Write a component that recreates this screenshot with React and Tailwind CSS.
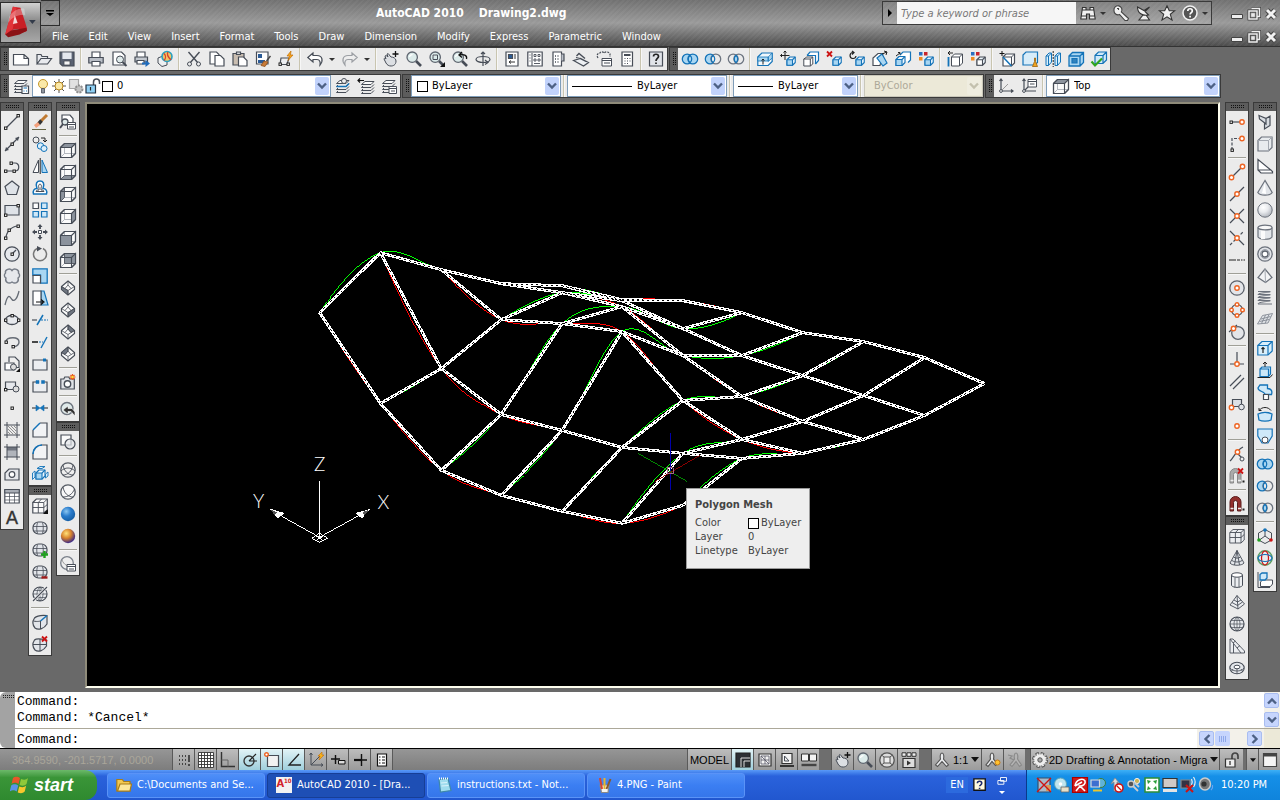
import { useState } from 'react';

const K = '#474d57';
const B = '#1473b8';
const L = '#a9d6f2';
const G = '#dfe3e8';
const O = '#ee6423';
const R = '#cc1414';

// One path with the defaults that most icons share
function P({ d, s = K, f = 'none', w = 1.2, dash }) {
  return <path d={d} stroke={s} fill={f} strokeWidth={w} strokeDasharray={dash} />;
}

function Dot({ x, y, r = 1.8 }) {
  return <circle cx={x} cy={y} r={r} fill="#fff" stroke={O} strokeWidth="1.4" />;
}

function Grips({ at }) {
  return at.map(([x, y]) => (
    <rect key={`${x}-${y}`} x={x - 1} y={y - 1} width="2.4" height="2.4" fill="#fff" stroke="#222" strokeWidth="1" />
  ));
}

function MiniCube({ x = 6, y = 6, size = 6, s = B, f = L }) {
  const d = size / 2;
  return (
    <g stroke={s} strokeWidth="1.1" strokeLinejoin="round">
      <path d={`M${x} ${y + d}l${d} ${-d}h${size}v${size}l${-d} ${d}h${-size}z`} fill="#eef7fd" />
      <path d={`M${x} ${y + d}h${size}v${size}h${-size}z`} fill={f} />
      <path d={`M${x + size} ${y + d}l${d} ${-d}`} />
    </g>
  );
}

const faces = {
  top: 'M.5 5.5l4-4h11l-4 4z',
  bottom: 'M.5 15.5l4-4h11l-4 4z',
  left: 'M.5 5.5l4-4v10l-4 4z',
  right: 'M11.5 5.5l4-4v10l-4 4z',
  front: 'M.5 5.5h11v10H.5z',
  back: 'M4.5 1.5h11v10h-11z',
};

function ViewCube({ face }) {
  return (
    <>
      <P d="M.5 5.5l4-4h11v10l-4 4H.5z" f="#fbfbfb" />
      <P d="M4.5 1.5v10h11M4.5 11.5l-4 4" s="#a2a7b0" w={0.8} />
      <P d={faces[face]} f="#8c939d" w={0.8} />
      <P d="M.5 5.5h11v10H.5zM11.5 5.5l4-4v10l-4 4M.5 5.5l4-4h11" w={1.1} />
    </>
  );
}

const isoFaces = {
  sw: 'M1.5 6.5l6.5 4V15L1.5 9.500z',
  se: 'M8 10.5l6.500-4v3L8 15z',
  ne: 'M8 1l6.500 5.500L11 8.500 8 5z',
  nw: 'M8 1L1.500 6.500 5 8.500 8 5z',
};

function IsoCube({ face }) {
  return (
    <>
      <P d="M8 1l6.500 5.500v3L8 15 1.500 9.500v-3z" f="#fafafa" />
      <P d={isoFaces[face]} f="#6f7681" w={0.8} />
      <P d="M1.500 6.500l6.500 4 6.500-4M8 10.500V15M8 1v4M8 5L5 8.500M8 5l3 3.500" w={0.8} />
    </>
  );
}

function Rings({ mode }) {
  const lens = 'M8 4.2a5 5 0 0 1 0 7.6a5 5 0 0 1 0-7.6z';
  return (
    <>
      <circle cx="5.2" cy="8" r="4.9" fill={mode === 'inter' ? 'none' : L} stroke={mode === 'inter' ? '#6d7580' : B} strokeWidth="1.3" />
      <circle cx="10.8" cy="8" r="4.9" fill={mode === 'union' ? L : mode === 'sub' ? '#ebebeb' : 'none'} stroke={mode === 'union' ? B : '#6d7580'} strokeWidth="1.3" />
      <P d={lens} f={mode === 'inter' ? L : 'none'} s={B} />
    </>
  );
}

function Globe({ s = K, f = '#e8ebef' }) {
  return (
    <>
      <circle cx="8" cy="8" r="7" fill={f} stroke={s} strokeWidth="1.2" />
      <P d="M1 8h14M2.500 4.500h11M2.500 11.500h11M8 1v14M8 1C4 4 4 12 8 15M8 1c4 3 4 11 0 14" s={s} w={0.7} />
    </>
  );
}

function Smooth() {
  return (
    <>
      <rect x="1" y="2" width="14" height="12" rx="5.5" fill="#e2e5ea" stroke={K} strokeWidth="1.2" />
      <P d="M1 6.500h14M2 11h12M5.500 2.500c-1 3-1 8 0 11M10.500 2.500c1 3 1 8 0 11" w={0.8} />
    </>
  );
}

function Lens() {
  return (
    <>
      <P d="M10 10l5 5" w={2.6} />
      <circle cx="6.2" cy="6.2" r="5.2" fill="#dcebea" stroke="#5f6670" strokeWidth="1.3" />
      <P d="M3.500 6a3 3 0 0 1 3-2.400" s="#fff" />
    </>
  );
}

function Layers({ s = K }) {
  return (
    <>
      <P d="M5 2.500h9l-3 3H1.500z" s={s} f="#fafafa" w={1} />
      <P d="M3 7L1.500 8.500h9.500l3-3M3 10l-1.500 1.500h9.500l3-3M3 13l-1.500 1.500h9.500l3-3" s={s} w={1} />
    </>
  );
}

function Hand() {
  return (
    <>
      <P d="M2 5c1-1 2 0 3 1l-1-3c1-1 2 0 3 2l1 1c2 0 5 1 5 4 0 4-3 5-5 5s-4-1-5-3L1 8c0-1 1-1 2 0z" f="#dcdfe3" w={1} />
      <P d="M12.5 0v6M9.5 3h6" s="#111" w={1.3} />
    </>
  );
}

function Cross({ x = 8, y = 1 }) {
  return <P d={`M${x} ${y}l5 5m0-5l-5 5`} s={R} w={1.8} />;
}

function Magnet({ s, f }) {
  return (
    <>
      <P d="M1 15V6a5.500 5.500 0 0 1 11 0v9H8.500V6.500a2 2 0 0 0-4 0V15z" s={s} f={f} w={1} />
      <P d="M1.500 12.500h3M9 12.500h3" s="#eee" w={1.6} />
      <rect x="13.5" y="12.5" width="2" height="2" fill="#222" />
    </>
  );
}

function Sphere({ id, a, b, c, ring }) {
  return (
    <>
      <defs>
        <radialGradient id={id} cx="38%" cy="32%" r="75%">
          <stop offset="0" stopColor={a} />
          <stop offset="0.45" stopColor={b} />
          <stop offset="1" stopColor={c} />
        </radialGradient>
      </defs>
      <circle cx="8" cy="8" r="7.2" fill={`url(#${id})`} stroke={ring} />
    </>
  );
}

const icons = {
  new: <P d="M.5 14V3.500h10.500l4.500 4V14zM11 3.500v4h4.500" f="#fff" />,
  open: <P d="M1 13V3.500h4l1 2h5.500V8M1 13l4-5.500h10.500L11.500 13z" f="#e8eaee" />,
  save: <><P d="M1 1h14v14H3.500L1 12.500z" f="#596171" /><P d="M4 2h8v5.500H4z" s="#e4e8ee" f="#e4e8ee" /><P d="M5 10h6v4H5z" f="#f5f5f5" w={0.8} /></>,
  print: <><P d="M4 7V1h8v6" f="#fff" /><P d="M.8 6.500h14.400v5.500H.8z" f="#b9bec6" /><P d="M4 10.500h8V15H4z" f="#fff" /></>,
  preview: <><P d="M2 1h8.500l3.500 3.500V14H2z" f="#fff" /><circle cx="9" cy="8.5" r="3.5" fill="#dfeaea" stroke={K} /><P d="M11.500 11l4 4" w={2} /></>,
  publish: <><P d="M3 6V1h8v5" f="#fff" /><P d="M1 6h12.500v5H1z" f="#c3c8cf" /><P d="M3 9.500h7V13H3z" f="#fff" /><P d="M8 11.500h3.500V9l4.500 3.500-4.500 3.500v-2.500H8z" s="none" f="#1f6bbb" /></>,
  web: <><P d="M1 7l5-2 4 4v5l-5 1.500L1 12z" f="#eef0f2" w={1} /><circle cx="10" cy="5.5" r="5" fill="#f2c464" stroke="#2a9fc0" strokeWidth="1.6" /><P d="M7 2.500c2 2 2 5 0 7M11 1c-2 3 1 6 3 8" s="#d6402f" w={1.3} /></>,
  cut: <><P d="M2.500 1l9.500 11M13.500 1L4 12" w={1.4} /><circle cx="3.5" cy="13" r="2" stroke={K} fill="#eee" /><circle cx="12.5" cy="13" r="2" stroke={K} fill="#eee" /></>,
  copyclip: <><P d="M1 1h6.500l2.500 2.500V13H1z" f="#fff" /><P d="M6 4.500h5.500l3.500 3.500v7H6z" f="#fff" /></>,
  paste: <><P d="M1 2.500h11V14H1z" f="#c9bdb0" /><P d="M4.500 1h4v2.500h-4z" f="#d5d8dc" /><P d="M6.500 6h5l3.500 3.500V15H6.500z" f="#fff" /></>,
  match: <><P d="M1.500 1h11.500v12H1.500z" f="#fff" /><P d="M3 3h4v4H3zM3 9h7v3H3z" f="#2b5b96" s="none" /><P d="M15.500 5l-4 5" s="#444" w={1.4} /><P d="M9 10l4 1-3 4.500-4-1z" f="#c77a37" s="#8c4f1c" w={0.8} /></>,
  blockedit: <><P d="M3 7h8l-2 6.500H2z" f="#eceef1" /><P d="M13 0L9 5h2.500L10 9.500 15 4h-2.500z" f="#f7a51c" s="#c26f08" w={0.7} /><Grips at={[[2, 13], [10, 13]]} /></>,
  undo: <P d="M6 2L.8 6.500 6 11V8.500h4c3 0 3.500 3 3 5.500 3.500-4 2.500-9.500-3-9.500H6z" f="#fff" />,
  redo: <P d="M10 2l5.200 4.500L10 11V8.500H6c-3 0-3.500 3-3 5.500C-.5 10 .5 4.500 6 4.500h4z" f="#eee" s="#9c9fa4" />,
  pan: <Hand />,
  zoom: <Lens />,
  zoomwin: <><Lens /><P d="M4 4h4.500v4.500H4z" w={1} /><P d="M16 11v5h-5z" f="#111" s="none" /></>,
  zoomprev: <><Lens /><P d="M14.500 8c1-4-3-5-7-4M10 1L7 4l3 2.500" s="#111" w={1.3} /></>,
  orbit: <><P d="M8 1v14M6 3l2-2 2 2" /><ellipse cx="8" cy="8.5" rx="7" ry="3" fill="none" stroke={K} strokeWidth="1.2" /><P d="M10 9l3 2.500-3 2" /></>,
  props: <><P d="M2 1h12v14H2z" f="#fff" /><P d="M4.500 3.500h4v4h-4z" f="#2b5b96" /><P d="M11 3v5M5 11h6M7 9.500L5 11l2 1.500" s="#333" w={1} /></>,
  center: <><P d="M.8 1h14.400v14H.8z" f="#fff" /><P d="M5 2v13M2.500 4h1M2.500 7h1M2.500 10h1" w={1} /><P d="M7 3.500h2v2H7zM11 3.500h2v2h-2zM7 8h2v2H7zM11 8h2v2h-2zM7 12.500h6" w={0.9} /></>,
  palettes: <><P d="M3 1h8.500v14H3z" f="#fff" /><P d="M11.500 3H14v7h-2.500" f="#bcc1c9" /><P d="M5 5h1M7.500 5h1M5 8h1M7.500 8h1M5 11h1M7.500 11h1" w={1.5} /></>,
  sheets: <><P d="M.5 9.500l7-2 8 4-5 3.500zM3 6.500l4 1 6 3" f="#eceff2" /><P d="M3.500 5L6 2.500l6 5" w={1.4} /></>,
  markup: <><P d="M2 7c-2-3 0-5 2-5 1-2 4-1 4 0 2-2 5-1 6 1v3" dash="2 1" /><P d="M6 7.500h9.500V15H6zM6 9.500h9.500M8 12h6" f="#fff" w={1} /></>,
  calc: <><P d="M3 1h10.500v14H3z" f="#fff" /><P d="M5 4h6.500" w={2} /><P d="M5.500 7.500h1M8 7.500h1M10.500 7.500h1M5.500 10h1M8 10h1M10.500 10h1M5.500 12.500h1M8 12.500h1" w={1} /></>,
  help: <><P d="M1.500 1h13v14h-13z" f="#e0e3e8" /><P d="M5.500 5.500c0-3 5-3 5 0 0 2-2.500 2-2.500 4.500M8 11.500v1.600" s="#222" w={1.7} /></>,
  union: <Rings mode="union" />,
  subtract: <Rings mode="sub" />,
  intersect: <Rings mode="inter" />,
  extrude: <><P d="M.8 6l4-4h10.400v8.500l-4 4H.8z" f="#f2f8fc" s={B} /><P d="M.8 6h10.400v4H.8zM11.200 6l4-4v5l-4 3.500z" f={L} s={B} w={0.8} /><P d="M6 13.500V8M4.500 9.500L6 8l1.500 1.500" s="#222" w={1} /></>,
  movefaces: <><MiniCube x={7} y={6} size={5.5} /><P d="M5 0v9M.5 4.500h9M3.500 1.500L5 0l1.500 1.500M2 3L.5 4.500 2 6" s="#222" w={1} /></>,
  offsetfaces: <><P d="M4 4.500l3-3.500h8.500v8.500l-3 3.500" s={B} f="#fff" /><P d="M4 4.500h8.500V13" s={B} /><P d="M.8 8l3-2h6v7l-2.500 2H.8zM.8 8h6.500v7M7.300 8l2.500-2" f="#fff" w={1} /></>,
  delfaces: <><MiniCube x={7} y={6} size={5.5} /><Cross x={1} y={0.5} /></>,
  rotfaces: <><MiniCube x={7} y={6} size={5.5} /><P d="M4 1.500A3 3 0 1 0 7 5M3 0l2 1.500-2 2" s="#222" /></>,
  taper: <><P d="M1 14.500V7l5-4.500h5L8 14.500z" f="#fff" /><P d="M5 7l5-4 5 9-4 3z" f={L} s={B} /><P d="M10 3l5-2M12 0l3 1-1 3" s="#222" w={1} /></>,
  copyfaces: <><P d="M5 4l3-3h7.500v8L13 11.500" s={B} f="#fff" /><MiniCube x={1} y={5.5} size={6} /><P d="M1 5l4-3M3 1.500h2v2" s="#222" w={1} /></>,
  colorfaces: <><MiniCube x={7} y={6} size={5.5} /><P d="M1 1h3.500v3.500H1z" s="none" f="#2a6fc1" /><P d="M6 1h3.500v3.500H6z" s="none" f="#c8252c" /><P d="M1 6h3.500v3.500H1z" s="none" f="#ee8a22" /></>,
  copyedges: <><P d="M4.500 6l3-3h8v9l-3 3h-8zM4.500 6h8v9M12.500 6l3-3" f="#fff" w={1} /><P d="M1.500 15.500V6" s={B} w={1.8} /><P d="M1 2h5M3 0L1 2l2 2" s="#222" w={1} /></>,
  coloredges: <><MiniCube x={7} y={6} size={5.5} s={K} f="#fff" /><P d="M1 1h3.500v3.500H1z" s="none" f="#2a6fc1" /><P d="M6 1h3.500v3.500H6z" s="none" f="#c8252c" /><P d="M1 6h3.500v3.500H1z" s="none" f="#ee8a22" /></>,
  imprint: <><P d="M4 6l3-3h8.500v9l-3 3H4z" f="#fff" /><P d="M4 6h8.500v9M12.500 6l3-3" w={1} /><P d="M4 6l8.500 9" s={B} w={1.5} /><P d="M3 0v5M.5 2.500h5" s="#111" w={1} /></>,
  clean: <><P d="M1 4l3-3h11.500v10.500L12.500 14H1z" f="#d7ecf9" s={B} /><P d="M12.500 7v3.500l-2 5h5l-2-5V7z" f="#f2a41f" s="#9a620a" w={0.8} /></>,
  separate: <><P d="M1 5l3-3h2.500v9l-3 3.500H1zM1 5h2.500v9.500M3.500 5L6.500 2M10 5l3-3h2.500v9l-3 3.500H10zM10 5h2.500v9.500M12.500 5l3-3" s={B} f="#d9effb" w={1} /><P d="M8.200 0v16" s="#222" dash="2 1" w={1} /></>,
  shell: <><P d="M1 5l3.500-3.500h11v10L12 15H1zM1 5h11v10M12 5l3.500-3.500" f={L} s={B} w={1.3} /><P d="M4 7.500h5V12H4z" f="#3182bd" s={B} /></>,
  check: <><P d="M4 4.500L7.500 1h8v8l-3.500 3.500H4zM4 4.500h8v8M12 4.500L15.500 1" f="#cfe8f8" s={B} /><P d="M.5 10.500l3.500 4 7-7" s="#2fa51f" w={2.2} /></>,

  layerprops: <><Layers /><P d="M9 8h6.500v7.500H9z" f="#fff" /><P d="M10.500 10h3.500M10.500 13h1M13 13h1" s={B} /></>,
  bulb: <><circle cx="8" cy="6" r="4.5" fill="#fbe9a8" stroke="#c4962a" /><P d="M6.500 10.500h3V15h-3z" f="#8f96a0" w={0.8} /></>,
  sun: <><P d="M8 1v14M1 8h14M3 3l10 10M13 3L3 13" s="#555" w={1} /><circle cx="8" cy="8" r="4" fill="#fbe9a8" stroke="#b8861c" /></>,
  freeze: <><P d="M1.500 1.500h9v9h-9z" f="#e2e2e2" s="#a5a5a5" /><circle cx="11" cy="11" r="3.5" fill="#c2c2c2" stroke="#8f8f8f" strokeDasharray="2 1" strokeWidth="2" /></>,
  lock: <><P d="M8.500 7V4a3 3 0 0 1 6 0v2" s={K} w={1.5} /><P d="M1 7h9.500v8H1z" f="#8fd0f4" s="#234" /><P d="M5.500 9v3.500" s="#222" /></>,
  layercur: <><Layers /><circle cx="9" cy="3" r="2.5" fill="#eee" stroke={K} /><P d="M1.500 8.500h9.500l3-3" s={B} w={1.5} /></>,
  layerprev: <><g transform="translate(2 1)"><Layers /></g><P d="M0 2.500h6M2 .5l-2 2 2 2" s="#111" /></>,
  layerstate: <><Layers /><P d="M8 8.500h7.500v7H8zM8 10.500h7.500M10 13h4" f="#fff" w={1} /></>,
  ucs: <><P d="M3 1v12h12M1.500 3L3 1l1.500 2M13 11.500l2 1.500-2 1.500" /><P d="M3 13l7-7" s="#999" w={1} /><circle cx="3" cy="13" r="1.4" fill="#fff" stroke={K} /></>,
  ucsman: <><P d="M3 1v12h12M1.500 3L3 1l1.500 2M3 13l4-4" /><P d="M7 1.500h8.500V9H7zM7 3.500h8.500M9 6h4.500" f="#fff" w={1} /><circle cx="3" cy="13" r="1.4" fill="#fff" stroke={K} /></>,
  topview: <ViewCube face="top" />,

  line: <><P d="M2 14L14 2" /><Grips at={[[1.5, 14], [14, 1.5]]} /></>,
  xline: <><P d="M1 15L15 1" /><P d="M15 1l-4 1 3 3zM1 15l4-1-3-3z" f={K} s="none" /><Grips at={[[8, 8]]} /></>,
  pline: <><P d="M2 13h9c5 0 5-8 0-8H8" /><Grips at={[[1.5, 13], [10, 13], [7, 5]]} /></>,
  polygon: <P d="M8 1l7 5.500L12.500 14.500h-9L1 6.500z" f={G} />,
  rect: <><P d="M1 3.500h14V13H1z" f={G} /><Grips at={[[1.5, 13], [14, 3.5]]} /></>,
  arc: <><P d="M2 14C2 8 8 2 14 2" /><Grips at={[[1.5, 14], [5, 6], [14, 2]]} /></>,
  circle: <><circle cx="8" cy="8" r="7.2" fill="#e6e8ec" stroke={K} strokeWidth="1.3" /><P d="M8 8l4-4" /><Grips at={[[8, 8]]} /></>,
  cloud: <P d="M8 2.500c2-3 7.500-1 6.500 2.500 2 2 1 4-.5 5 1.500 4-2.500 6.500-6 4-3.500 2.500-7.500 0-6-4-1.500-1-2.500-3-.5-5-1-3.500 4.500-5.500 6.500-2.500z" f="#e6e8ec" s="#777d87" w={1.4} />,
  spline: <P d="M1 15C4 2 6 7 8 9.500s5 0 7-8.500" s="#666c75" w={1.3} />,
  ellipse: <><ellipse cx="8" cy="8" rx="6.5" ry="4.5" fill="#e6e8ec" stroke={K} strokeWidth="1.3" /><Grips at={[[1.5, 8], [8, 3.5], [14.5, 8]]} /></>,
  ellarc: <><P d="M2 7c1-4 13-5 13 1 0 3-3 4.500-6 5" w={1.4} s="#666c75" /><Grips at={[[9, 12.5], [2, 8]]} /></>,
  insblock: <><P d="M5 6V1h6l4 4v6.500h-4" f="#eee" /><P d="M1 7h9v7H1z" f="#fff" /><circle cx="9.5" cy="11" r="3" fill="#ddd" stroke={K} /><P d="M16 12v4h-4z" f="#111" s="none" /></>,
  mkblock: <><P d="M1.500 4h10v7.500h-10z" f="#e6e8ec" /><circle cx="12" cy="11" r="3" fill="#ddd" stroke={K} /><Grips at={[[1.5, 11.5]]} /></>,
  point: <Grips at={[[8, 8]]} />,
  hatch: <><P d="M3 0v16M13 0v16M0 3h16M0 13h16" w={1} /><P d="M4 7l5 5M4 4l8 8M7 4l5 5M4 10l2 2M10 4l2 2" w={0.8} s="#777" /></>,
  gradient: <><P d="M3 3h10v10H3z" f="#b0b4bb" s="none" /><P d="M3 3h10v3.500H3z" f="#70757f" s="none" /><P d="M3 0v16M13 0v16M0 3h16M0 13h16" w={1} /></>,
  region: <><P d="M1 14V7l4-4h10v11z" f="#e6e8ec" /><circle cx="8" cy="8.5" r="2.8" fill="#fff" stroke={K} strokeWidth="1.2" /></>,
  table: <><P d="M.8 1.500h14.400v13.500H.8z" f="#fff" /><P d="M.8 1.500h14.400V5H.8z" f="#a9aeb6" w={1} /><P d="M1 8.500h14M1 12h14M5.500 5v10M10.500 5v10" w={0.7} /></>,
  mtext: <text x="8" y="14" textAnchor="middle" fontSize="18" fontFamily="Liberation Sans, sans-serif" fill="#333" stroke="#333" strokeWidth="0.4">A</text>,

  erase: <><P d="M15 1L9 7" s="#c07a32" w={3} /><P d="M9.500 6.500L6.500 10" s="#333" w={3.5} /><P d="M7 9.500l-4 3" s="#f3a07c" w={3.5} /><P d="M0 15.500h14" s="#664" w={1} /></>,
  copy: <><circle cx="4" cy="4" r="3" fill="#eee" stroke={K} /><circle cx="8.5" cy="10" r="3.2" fill="#dceffb" stroke={B} /><circle cx="12" cy="12.5" r="3" fill="#dceffb" stroke={B} /><P d="M9 2h4v4M11 4l2 2 2-2" s="#222" w={1} /></>,
  mirror: <><P d="M6.500 2v12.500H1z" f="#fff" w={1} /><P d="M10 2v12.500h5.500z" f={L} s={B} w={1} /><P d="M8.200 0v16" s="#222" w={1} /></>,
  offset: <><P d="M1.500 14h13c1-3-.5-5.500-3.500-5.500C13 3.500 11 1 8 1S3 3.500 5 8.500c-3 0-4.500 2.500-3.500 5.500z" s={B} w={1.5} f="#fff" /><P d="M4 11.500h8c0-1-1-1.500-3-1.500V8c1-2 0-4-1-4S6 6 7 8v2c-2 0-3 .5-3 1.500z" w={1} /></>,
  array: <><P d="M1 1h5.500v5.500H1z" f="#fff" /><P d="M9.500 1H15v5.500H9.500zM1 9.500h5.500V15H1zM9.500 9.500H15V15H9.500z" s={B} f="#cfe8f8" w={1.2} /></>,
  move: <><P d="M8 0l2.500 3h-5zM8 16l2.500-3h-5zM0 8l3-2.500v5zM16 8l-3-2.500v5z" f={K} s="none" /><P d="M8 3v2M8 11v2M3 8h2M11 8h2" w={1.8} /><P d="M6.500 6.500h3v3h-3z" f="#fff" w={1} /></>,
  rotate: <><P d="M5 2.500a6.500 6.500 0 1 0 6 0" s="#777" w={1.5} /><P d="M5 0l5 2.500L5 5.500z" f={K} s="none" /></>,
  scale: <><P d="M.8.800h14.400v14.400H8.500V7H.8z" f={L} s={B} w={1.3} /><P d="M1 7.500h7.500V15H1z" f="#fff" /></>,
  stretch: <><P d="M9 1h3l4 14H9z" f={L} s={B} /><P d="M1 1h8v14H1z" f="#fff" /><P d="M4 12h7M9 9.500l3 2.500-3 2.500" s="#111" /></>,
  trim: <><P d="M0 8h5" /><P d="M11 3L5 13" s={B} w={1.5} /><P d="M9 8h7" s={B} dash="2 1" /></>,
  extend: <><P d="M0 8h6" s="#111" w={1.5} /><P d="M7 8h4" s={B} dash="2 1" /><P d="M15 3L9 14" s={B} w={1.4} /></>,
  breakpt: <><P d="M1 4h14v10H1z" f="#eceef1" /><P d="M11 2.500h3v3h-3z" f={B} s="none" /></>,
  break: <><P d="M4 4H1v10h14V4h-3" f="#eceef1" /><P d="M4 2.500h3v3H4zM9.500 2.500h3v3h-3z" f={B} s={B} w={0.5} /></>,
  join: <><P d="M0 8h4M12 8h4" s="#222" /><P d="M4 5l4 3-4 3zM12 5L8 8l4 3z" f={B} s={B} w={0.6} /></>,
  chamfer: <><P d="M1 8v7h14V1H8z" f="#f2f3f5" s="none" /><P d="M1 8v7h14V1H8" /><P d="M1 8l7-7" s={B} w={1.5} /></>,
  fillet: <><P d="M1 10v5h14V1h-5C5 1 1 5 1 10z" f="#f2f3f5" /><P d="M1 10c0-5 4-9 9-9" s={B} w={1.6} /></>,
  explode: <><MiniCube x={4} y={4} size={6} /><P d="M.5 7L3 5v6l-2.500 2.500zM13.500 8L16 6v4l-2.500 2zM5 2.500L8 .5h5l-3 2z" s={B} f="#dceffb" w={0.9} /></>,

  meshbox: <><P d="M.8 4.500l3.500-3.500h11v11l-3.500 3H.8z" f="#fafafa" /><P d="M.8 4.500h11V15M11.800 4.500L15.300 1M6.300 4.500V15M.8 9.500h11l3.500-3M6.300 4.500L9.500 1" w={0.9} /><P d="M16 11v5h-5z" f="#111" s="none" /></>,
  smooth: <Smooth />,
  smoothmore: <><Smooth /><P d="M12.500 9v7M9 12.500h7" s="#21a021" w={2.4} /></>,
  smoothless: <><Smooth /><P d="M9.500 13.500h6" s="#a01818" w={2.4} /></>,
  refine: <><Globe /><P d="M1 15L15 1" s="#fff" w={2.5} /><P d="M1 15L15 1" /></>,
  crease: <><P d="M2.500 4C5 1.500 10 1 15 1.500V10c-3 5-9 6.500-12 4-2.500-3-2.500-7-.5-10z" f="#e2e5ea" /><P d="M1.500 7c4 1 7 0 7 0v8" w={1} /><P d="M8.500 7L15 1.500" s={B} w={1.5} /></>,
  uncrease: <><P d="M2.500 4C5 1.500 10 3 14.500 4V10c-3 5-8.500 6.500-11.500 4-2.500-3-2.500-7-.5-10z" f="#e2e5ea" /><P d="M1 8.500h13M8 3v12" w={1} /><Cross x={10} y={0.5} /></>,

  namedviews: <><P d="M2 8V1h8l3 3.500V8" f="#fff" /><circle cx="5" cy="8" r="3" fill="#dfeaea" stroke={K} strokeWidth="1.3" /><P d="M3 10l-3 4" w={2} /><P d="M7.500 8.500h8V15h-8zM7.500 10.500h8M9 13h5" f="#fff" w={1} /></>,
  vtop: <ViewCube face="top" />,
  vbottom: <ViewCube face="bottom" />,
  vleft: <ViewCube face="left" />,
  vright: <ViewCube face="right" />,
  vfront: <ViewCube face="front" />,
  vback: <ViewCube face="back" />,
  sw: <IsoCube face="sw" />,
  se: <IsoCube face="se" />,
  ne: <IsoCube face="ne" />,
  nw: <IsoCube face="nw" />,
  camera: <><P d="M.8 5h3l1-2h4l1 2h4.500v10H.8z" f="#dfe2e6" /><circle cx="7.5" cy="10" r="3.2" fill="#fff" stroke={K} strokeWidth="1.4" /><P d="M12.500 0v6M9.500 3h6M10.500 1l4 4M14.500 1l-4 4" s="#e8541c" w={1.2} /><circle cx="12.5" cy="3" r="1.3" fill="#ffd936" /></>,
  viewprev: <><circle cx="7" cy="6.5" r="6" fill="#dfeaea" stroke="#6d747e" strokeWidth="1.4" /><P d="M8 4L3 8l5 4V9.500h3l4 4.500V10l-3-3.500H8z" f="#333" s="#fff" w={0.6} /></>,
  wire2d: <><P d="M1 1h10v10H1z" f="#fafafa" /><circle cx="10" cy="10" r="5" fill="#e2e5e9" fillOpacity="0.7" stroke={K} strokeWidth="1.2" /></>,
  wire3d: <><circle cx="8" cy="8" r="7.2" fill="#eee" stroke="#555b64" strokeWidth="1.3" /><P d="M3 3c1 6 5 10 10 10M13 3c-1 6-5 10-10 10M1 9C5 5 11 5 15 9" w={0.9} /></>,
  hidden3d: <><circle cx="8" cy="8" r="7.2" fill="#f8f8f8" stroke="#555b64" strokeWidth="1.3" /><P d="M3 3c1 6 5 10 10 10M14.500 5c-2 5-6 8-11.500 8" w={0.9} /></>,
  realistic: <Sphere id="blue" a="#8cc6f0" b="#2a7ccc" c="#135a9f" />,
  conceptual: <Sphere id="gold" a="#ffe27a" b="#d8832c" c="#1f1a98" />,
  vsmanager: <><circle cx="7" cy="7" r="6.3" fill="#eee" stroke="#7a808a" strokeWidth="1.3" /><P d="M2 4c2 5 5 6 10 6" s="#999" w={1} /><P d="M7 8.500h8.500V15H7zM7 10.500h8.500M9 13h5" f="#fff" w={1} /></>,

  track: <><P d="M3 8h8" /><Grips at={[[2, 8]]} /><Dot x={13} y={8} r={2.2} /></>,
  from: <><P d="M3 14V2.500h8" dash="3 1.5" /><Grips at={[[3, 14]]} /><Dot x={13} y={2.5} r={2.2} /></>,
  endpoint: <><P d="M3 13L13 3" /><Dot x={2.5} y={13.5} r={2.2} /><Dot x={13.5} y={2.5} r={2.2} /></>,
  midpoint: <><P d="M1 15L15 1" /><Dot x={8} y={8} r={2.2} /></>,
  intersection: <><P d="M1 1l14 14M1 15L15 1" /><Dot x={8} y={8} r={2.2} /></>,
  apparent: <><P d="M1 1l5 5M10 10l5 5" /><P d="M1 15L15 1" dash="3 2" /><Dot x={8} y={8} r={2.2} /></>,
  extension: <P d="M0 8h7M8 8h3M12 8h1.500M14.500 8H16" s="#222" />,
  osnapcenter: <><circle cx="8" cy="8" r="7.2" fill="#e3e5e9" stroke="#5b616b" strokeWidth="1.3" /><Dot x={8} y={8} r={2.2} /></>,
  quadrant: <><circle cx="8" cy="8" r="5.5" fill="#e9ebee" stroke={K} strokeWidth="1.2" /><Dot x={8} y={2.5} /><Dot x={8} y={13.5} /><Dot x={2.5} y={8} /><Dot x={13.5} y={8} /></>,
  tangent: <><circle cx="9" cy="9" r="6.3" fill="#e3e5e9" stroke="#5b616b" strokeWidth="1.3" /><P d="M0 8l8-7" /><Dot x={4.5} y={4.5} r={2.2} /></>,
  perpendicular: <><P d="M8 0v11M1 12h14" /><Dot x={8} y={12} r={2.2} /></>,
  parallel: <P d="M1 12L12 1M4 15L15 4" />,
  osinsert: <><P d="M3.500 3.500h9v7h-9z" f="#dde0e5" /><circle cx="12.5" cy="11" r="2.8" fill="#e3e5e9" stroke={K} /><Dot x={2.5} y={11.5} r={2.2} /></>,
  node: <Dot x={8} y={8} r={2.2} />,
  nearest: <><P d="M1 15C5 12 6 5 14 1M8 7l5 5" /><Dot x={8.5} y={6} r={2.2} /><circle cx="13" cy="13" r="2" fill="#eee" stroke={K} /></>,
  osnone: <><Magnet s="#888" f="#aaa" /><Cross x={9} y={0.5} /></>,
  ossettings: <Magnet s="#5a1c1c" f="#93302e" />,

  mbox: <><P d="M.8 4.500L4 1.500h11.200V12L12 15H.8zM.8 4.500H12V15M12 4.500l3.200-3M6.400 4.500V15M.8 9.500H12l3.200-3M6.400 4.500l3-3" f="#eceef1" w={0.9} /></>,
  mcone: <P d="M8 .5L1 13c2 3 12 3 14 0zM8 .5L5.500 15M8 .5l2.500 14.500M4.500 7c2 1.500 5 1.500 7 0M3 10.500c3 2 7 2 10 0" f="#e3e6ea" w={0.9} />,
  mcylinder: <><P d="M2.500 3v10.500c2 2.500 9 2.500 11 0V3" f="#eceef1" w={1} /><ellipse cx="8" cy="3" rx="5.5" ry="2.2" fill="#fff" stroke={K} /><P d="M6 5.500v10M10 5.500v10" w={0.8} /></>,
  mpyramid: <P d="M8 1.500L1 11l8 4 6.500-5zM8 1.500L9 15M5 6l3.500 2L12 6M3 8.500l5.500 3 5-3.500" f="#eceef1" w={0.9} />,
  msphere: <Globe />,
  mwedge: <P d="M1 1v14h11zM1 1h3l11.500 12v2H12M4 5l2.500-2M8 10l3-2.500M4.500 15V6" f="#eceef1" w={0.9} />,
  mtorus: <><ellipse cx="8" cy="8" rx="7.2" ry="5.8" fill="#e4e7eb" stroke={K} strokeWidth="1.1" /><ellipse cx="8" cy="7" rx="3" ry="1.8" fill="#fff" stroke={K} /><P d="M1 8c3 4 11 4 14 0M8 9v4.500M4 9l-2 3M12 9l2 3" w={0.8} /></>,

  polysolid: <P d="M2 1.500l7 3v5.500L2.500 5zM9 4.500L13 2v9.500L7.500 15V10L9 9.500z" f="#d8dce1" />,
  box: <><P d="M1 4.500L4.500 1H15v10.500L11.500 15H1z" f="#e8ebee" s="#6c727c" /><P d="M1 4.500h10.500V15M11.500 4.500L15 1" s="#a4a9b1" w={1} /></>,
  wedge: <P d="M1 1.500V12l3 3h11.500v-1.500zM1 12h13.500" f="#fff" />,
  cone: <><P d="M8 .5L.8 12.500c2 3.500 12.400 3.500 14.400 0z" f="#e2e5e9" s="#6c727c" /><P d="M8 2L5 13l4 1z" f="#fff" s="none" /></>,
  sphere: <Sphere id="grey" a="#ffffff" b="#e9ebee" c="#a9aeb6" ring="#6c727c" />,
  cylinder: <><P d="M1 3.500v9.500c2 3 12 3 14 0V3.500" f="#e2e5e9" s="#6c727c" /><P d="M4 6h4v9H4z" f="#fbfbfb" s="none" /><ellipse cx="8" cy="3.5" rx="7" ry="2.3" fill="#f8f8f8" stroke="#6c727c" strokeWidth="1.2" /></>,
  torus: <><circle cx="8" cy="8" r="7.2" fill="#e2e4e8" stroke="#6c727c" strokeWidth="1.3" /><circle cx="8" cy="8" r="4.5" fill="none" stroke="#9a9fa8" /><circle cx="8" cy="8" r="3" fill="#fff" stroke="#5c626c" strokeWidth="1.3" /></>,
  pyramid: <><P d="M8 1L1 9.500l7.500 5 6.500-5z" f="#f3f4f6" s="#6c727c" /><P d="M8 1l.5 13.500" s="#a4a9b1" w={1} /></>,
  helix: <P d="M1 1.500h12c3 1-12 1-12 3h12c3 1-12 1-12 3h12c3 1-12 1-12 3h12c3 1-12 1-12 3.500h14" s="#6c727c" w={1} />,
  planar: <P d="M.5 12l5-8.500 10-2L11 11zM4 7l9.500-2.500M2.500 9.500l9.500-2M8.500 3L4.500 11.500M12 2.500L8 11.500" s="#848a94" f="#e0e3e7" w={0.9} />,
  extrude2: <><P d="M.8 5.500L5 1.500h10.200v9.500L11 15H.8z" f="#d9effb" s={B} /><P d="M.8 5.500H11V15M11 5.500l4.200-4" s={B} /><P d="M6 13V7.500M4.500 9L6 7.500 7.500 9" s="#222" /></>,
  presspull: <><P d="M3 7l2-2h8.500v7l-2 2.500H3zM3 7h8.500v7.500" f="#cbe7f8" s={B} /><P d="M.5 15.500H13l2.500-3M8 5V0M6 2l2-2 2 2" s="#222" w={1} /></>,
  sweep: <><P d="M3 1h7.500v3.500c4 0 5 3 4 6H8C8 7 1 8 1 4z" f="#cfe9f9" s={B} w={1.3} /><P d="M6.500 10.500h5V15.500h-5z" f="#fff" /></>,
  revolve: <><P d="M2 4.500c3-4 9-4 12 0M2 2v2.500h2.500" s="#222" w={1} /><P d="M1 8c4-2 10-2 14 0l-1 6c-3 1.500-9 1.500-12 0z" f="#cfe9f9" s={B} w={1.3} /></>,
  loft: <><P d="M.8 1h14.400v7L11 15H5L.8 8z" f="#cfe9f9" s={B} w={1.2} /><circle cx="8" cy="12" r="3" fill="#fff" stroke={K} /></>,
  align3d: <><P d="M8 2v6l5.500 4M8 8l-5.500 4M1.500 5L8 1.500 14.500 5v7L8 15.500 1.500 12z" w={1} /><circle cx="8" cy="2" r="1.8" fill={B} /><circle cx="2" cy="12" r="1.8" fill="#21a021" /><circle cx="14" cy="12" r="1.8" fill={R} /></>,
  gizmo: <><circle cx="8" cy="8" r="7.2" fill="none" stroke="#5c9c62" strokeWidth="1.4" /><ellipse cx="8" cy="8" rx="3.5" ry="7" fill="none" stroke={R} strokeWidth="1.2" /><ellipse cx="8" cy="8" rx="7" ry="3.5" fill="none" stroke={B} strokeWidth="1.2" /></>,
  align: <><P d="M3.500 10l2-2h10v4l-2 2.500h-10z" f="#fff" w={1} /><P d="M3 2.500L5 1h5v5L8 8H3z" f="#cfe9f9" s={B} w={1.3} /><P d="M1 0v15.500h12" w={1} /></>,

  snap: <><P d="M3 4h9M3 8h9M3 12h9" dash="1 2" s="#222" w={1.4} /><P d="M13 3v7M13 12v2" s="#222" w={1.4} /></>,
  grid: <P d="M.5.500h15v15H.5zM3.500.500v15M6.500.500v15M9.500.500v15M12.500.500v15M.5 3.500h15M.5 6.500h15M.5 9.500h15M.5 12.500h15" f="#fff" s="#333" w={0.9} />,
  ortho: <><P d="M1.500 0v14.500H15" s="#333" w={1.4} /><P d="M1.500 8H8v6.500" s="#666" w={1} /></>,
  polar: <><circle cx="7" cy="9" r="5" fill="none" stroke="#333" strokeWidth="1.3" /><P d="M7 9h8M7 9l7-7" s="#222" w={1.1} /></>,
  osnap: <><P d="M3.500 3.500h11v11h-11z" f="#f2f2f2" /><Dot x={2.5} y={2.5} /></>,
  otrack: <P d="M13 2L3 13h12" s="#222" w={1.3} />,
  ducs: <><P d="M3 1v12h12M3 13l9-9M1.500 3L3 1l1.500 2M13 11.500l2 1.500-2 1.500" w={1} /><P d="M14 0l-4 4h2l-1 4 5-5h-2z" f="#f7b21c" s="#c26f08" w={0.6} /></>,
  dyn: <><P d="M1 7h9M5.500 3v9" s="#111" w={1.4} /><P d="M8.500 8.500H15V12H8.500z" s="#111" f="#ddd" w={1} /></>,
  lwt: <><P d="M2 8h8" s="#111" w={2.2} /><P d="M9.500 2v12M10 8h5" s="#111" w={1.4} /></>,
  qp: <><P d="M3.500 2h9v12h-9z" f="#fff" s="#111" /><P d="M5 5h1.500M8 5h3M5 8h1.500M8 8h3M5 11h1.500M8 11h3" s="#111" /></>,
  model: <><P d="M1 1h14v14H1z" f="#2c2f34" s="#222" /><P d="M15 6H6v9M15 9H9v6" s="#ddd" w={1} /></>,
  layout: <><P d="M2 2h12v12H2z" f="#f4f4f4" s="#333" /><P d="M4 4h8v8H4zM4 4l8 8M4 8h8M8 4v8" s="#556" w={0.8} /></>,
  quicklay: <><P d="M3 1.500h10v10H3z" f="#f4f4f4" s="#333" /><P d="M5.500 4v5h4.500z" w={1} /><P d="M1 14h14" s="#333" w={2} /></>,
  quickdraw: <><P d="M.5 2h7v7h-7zM8.500 2h7v7h-7z" f="#f4f4f4" s="#333" w={1} /><P d="M.5 13h15" s="#444" w={2.4} /></>,
  wheel: <><circle cx="8" cy="8" r="7.2" fill="#ddd" stroke="#555" strokeWidth="1.3" /><P d="M5 5h6v6H5zM2.500 3L5 5M11 5l2.500-2M5 11l-2.500 2M11 11l2.500 2" f="#eee" s="#555" w={1} /></>,
  motion: <><P d="M1 .8h4v3.500H1zM6 .8h4v3.500H6zM11 .8h4v3.500h-4z" f="#eee" s="#333" w={1} /><P d="M2 6.500h12v9H2z" f="#ddd" s="#333" /><P d="M6 8.500l4 2.500-4 2.500z" f="#333" s="none" /></>,
  anno: <P d="M8 1c2 0 2 4 1.500 6l5 6-2 1.500-4.500-5-4.500 5L1.500 13l5-6C6 5 6 1 8 1z" f="#eceef0" s="#555" w={1.1} />,
  annoadd: <><P d="M7 1c2 0 2 4 1.500 6l4 5-2 1.500-3.500-4-4 5L1 13l4.500-6C5 5 5 1 7 1z" f="#eceef0" s="#555" /><circle cx="12.5" cy="10.5" r="2.5" fill="#ffc22e" stroke="#c77a12" /></>,
  annoauto: <P d="M9 1c2 0 2 4 1.500 6l4 6-2 1.500-3.500-5-4 5L3 13l4.500-6C7 5 7 1 9 1zM1 3l4 1-2 2 4 2" f="#b5b5b5" s="#8a8a8a" />,
  gear: <><circle cx="8" cy="8" r="6" fill="none" stroke="#555" strokeWidth="4" strokeDasharray="2.9 1.812" /><circle cx="8" cy="8" r="5.8" fill="#eee" stroke="#eee" strokeWidth="2.4" strokeDasharray="1.6 2.955" strokeDashoffset="-0.6" /><circle cx="8" cy="8" r="5" fill="#eee" /><circle cx="8" cy="8" r="2.2" fill="#aaa" stroke="#555" /></>,
  unlock: <><P d="M8 7V4a3 3 0 0 1 6 0v3" s="#444" w={1.7} /><P d="M1.500 7H11v8H1.500z" f="#eee" s="#333" /><P d="M6 9v4" s="#222" /></>,
  cleanscr: <><P d="M1.500 1.500h13v13h-13z" f="#f4f4f4" s="#444" /><P d="M1.500 3h13" s="#444" w={3} /></>,

  binoc: <P d="M.8 14L2.500 2.500H6V5h4V2.500h3.500L15.200 14H9.500V9h-3v5zM2.500 5H6M10 5h3.500M1.500 11h5M9.500 11h5" f="#f0f0f0" s="#333" w={1.1} />,
  key: <P d="M1 5.500a4 4 0 1 1 7.300 1.500l7.200 6.500-1 2H12L6.500 9.500A4 4 0 0 1 1 5.500zM4 3.500h1.500V5" f="#f0f0f0" s="#444" w={1.1} />,
  dish: <P d="M1.500 2c0 6.500 5 9 11 8L9 6.500 13.500 2 8 5.500zM7 10l-4 5h10.500L10 10" f="#f0f0f0" s="#333" w={1.1} />,
  star: <P d="M8 .8l2.300 5h5.200l-4.200 3.500 1.700 5.700L8 11.800 3 15l1.700-5.700L.5 5.800h5.200z" f="#f0f0f0" s="#333" w={1.1} />,
  question: <><circle cx="8" cy="8" r="7" fill="#555" stroke="#f2f2f2" strokeWidth="1.5" /><P d="M5.800 6c0-3 4.500-3 4.500 0 0 1.700-2.200 1.700-2.200 3.600M8.100 10.800v1.800" s="#fff" w={1.7} /></>,

  folder: <><P d="M.8 14V2.500h5.500l1.500 2H14V14z" f="#f3c951" s="#a87c19" /><P d="M1.500 14L4 7h11.500L14 14z" f="#fde79a" s="#a87c19" /></>,
  notepad: <><P d="M3 2.500l9-1 3 12-10.500 1.500z" f="#9fdcee" s="#3e88a8" /><P d="M3 1.500h9" s="#fff" dash="1 1" w={2} /><P d="M5 6l6-.5M5.500 9l7-.5" s="#d9f2fa" /></>,
  paint: <><P d="M4 8h9l-1 7.500H5.500z" f="#f4f4f0" s="#888" /><P d="M6 12L4 1" s="#d9442e" w={2} /><P d="M8.500 12V1" s="#e7b52b" w={2} /><P d="M10.500 12l4-10" s="#8a5a2c" w={2} /></>,
  ime: <><P d="M1 1h13v13H1z" f="#fffbe0" s="#111" w={1.5} /><P d="M5 6c0-3 5-3 5 0 0 2-2.500 2-2.500 3.500M7.500 11v1.500" s="#1c2a6d" w={1.8} /></>,
  restore: <P d="M6 2h8v5H6zM2.500 6h8v5h-8z" s="#fff" f="#2459c8" w={1.2} />,
  t1: <><P d="M2 1h12v14H2z" f="#a9b9c9" s="#35506e" /><P d="M10 8h5v6h-5z" f="#d89a5a" s="none" /><P d="M1 1l14 14M15 1L1 15" s={R} w={1.4} /></>,
  t2: <><circle cx="6.5" cy="7" r="6" fill="#bfe5ee" stroke="#5ea4b8" /><circle cx="6.5" cy="7" r="1.8" fill="#fff" /><P d="M7 10h8v5H7z" f="#e7e0c8" s="#666" w={0.8} /></>,
  t3: <><P d="M.5.500h15v15H.5z" f="#d01b1b" s="#a00" /><P d="M3 9C4 2 11 1 13 4c1 3-2 5-5 5l5 5M3 9l7-4M8 9l-4 5" f="none" s="#fff" w={1.6} /></>,
  t4: <><circle cx="11" cy="6" r="4.5" fill="#5fb3d8" stroke="#3a7c3a" /><P d="M1 3h8.500v7H1z" f="#3e6fd0" s="#ddd" /><P d="M3 13.500h9" s="#e9c52c" w={2} /></>,
  t5: <><P d="M6 14V5L3 7l4-6 5 6-3-2v9z" f="#ddd" s="#888" w={0.8} /><circle cx="11" cy="11" r="4" fill="#fff" stroke={R} strokeWidth="1.6" /><P d="M8.500 8.500l5 5" s={R} /></>,
  t6: <><circle cx="5" cy="7" r="3" fill="#555" stroke="#ccc" strokeWidth="1.4" /><circle cx="11" cy="4" r="2.6" fill="#c9b458" stroke="#eee" /><P d="M7 9l5 5M9 6l4 4" s="#ccc" w={1.8} /></>,
  t7: <><P d="M1 1h14v14H1z" f="#fff" s="#2c8f39" w={1.5} /><P d="M3 3l4 1-3 3zM13 3L9 4l3 3zM3 13l4-1-3-3zM13 13l-4-1 3-3z" f="#2c9f39" s="none" /></>,
  t8: <><P d="M1 1.500h14v9H1z" f="#cfc9c6" s="#333" /><P d="M1 13.500h14" s="#e4e4e4" w={3} /></>,
  t9: <><P d="M1 3h9v8H1z" f="#334" s="#888" /><P d="M11.500 2c1 2 1 4 0 6M13.500 0c2 3 2 7 0 10" s="#eee" /><P d="M6 8l7 7M13 8l-7 7" s={R} w={2} /></>,
  t10: <><ellipse cx="7" cy="7" rx="5.5" ry="6" fill="#777" stroke="#ccc" strokeWidth="1.4" /><circle cx="6" cy="7" r="2.6" fill="#333" /><P d="M13 13c1-1 2-3 1.500-5" s="#6ba5f0" /></>,
};

function Icon({ name, className = 'size-4' }) {
  return (
    <svg viewBox="0 0 16 16" className={`shrink-0 overflow-visible ${className}`} aria-hidden="true">
      {icons[name]}
    </svg>
  );
}

function Tool({ name }) {
  return (
    <button type="button" aria-label={name} className="flex h-[22px] w-[23px] shrink-0 items-center justify-center">
      <Icon name={name} />
    </button>
  );
}

function Grip({ vertical }) {
  return (
    <div className={`flex shrink-0 items-center justify-center bg-[#5c5c5c] ${vertical ? 'h-2' : 'w-2'}`}>
      <div
        className={`bg-[conic-gradient(#111_25%,transparent_0)] bg-[length:2px_2px] ${vertical ? 'h-1 w-[14px]' : 'h-[14px] w-1'}`}
      />
    </div>
  );
}

function Sep() {
  return <div className="mx-[2px] w-[2px] shrink-0 self-stretch border-l border-[#c9c5b0] bg-white/60" />;
}

// Toolbars are lists of tool names; "|" stands for a separator
function HBar({ tools = '', children }) {
  return (
    <div className="flex h-6 border border-[#3a3a3a] bg-[#ebebeb]">
      <Grip />
      {tools.split(' ').filter(Boolean).map((t, i) => {
        if (t === '|') return <Sep key={i} />;
        if (t === 'v') return <Caret key={i} className="w-3" />;
        return <Tool key={i} name={t} />;
      })}
      {children}
    </div>
  );
}

function VBar({ tools }) {
  return (
    <div className="flex w-6 flex-col border border-[#3a3a3a] bg-[#ebebeb]">
      <Grip vertical />
      {tools.split(' ').map((t, i) =>
        t === '|' ? (
          <div key={i} className="mx-[2px] my-[2px] h-[2px] border-t border-[#9f9f97] bg-white/60" />
        ) : (
          <button key={i} type="button" aria-label={t} className="flex h-[22px] items-center justify-center">
            <Icon name={t} />
          </button>
        )
      )}
    </div>
  );
}

function Caret({ className = 'w-[13px]' }) {
  return (
    <span className={`flex shrink-0 items-center justify-center ${className}`}>
      <svg viewBox="0 0 6 3" className="h-[3px] w-[6px]">
        <path d="M0 0h6L3 3z" fill="#333" />
      </svg>
    </span>
  );
}

function Chevron({ dir = 'down', disabled }) {
  const turn = { down: '', up: 'rotate-180', left: 'rotate-90', right: '-rotate-90' }[dir];
  return (
    <svg viewBox="0 0 10 8" className={`h-2 w-[10px] ${turn}`}>
      <path d="M1 1.500l4 4 4-4" fill="none" stroke={disabled ? '#c4c1ae' : '#4d6185'} strokeWidth="2.4" />
    </svg>
  );
}

function Combo({ label, value, width, disabled, lead, padding = 'pl-1' }) {
  return (
    <div className={`flex h-[22px] min-w-0 items-center border ${width} ${disabled ? 'border-[#c9c7ba] bg-[#ece9d8]' : 'border-[#7f9db9] bg-white'}`}>
      {lead}
      <select
        aria-label={label}
        disabled={disabled}
        className={`h-full min-w-0 flex-1 appearance-none bg-transparent outline-none ${padding} ${disabled ? 'text-[#aca899]' : 'text-black'}`}
      >
        <option>{value}</option>
      </select>
      <span className={`mr-px flex h-[18px] w-[14px] items-center justify-center rounded-[2px] ${disabled ? 'bg-[#efede0]' : 'bg-[#c2d3fc]'}`}>
        <Chevron disabled={disabled} />
      </span>
    </div>
  );
}

function Swatch() {
  return <span className="size-[11px] shrink-0 border border-black bg-white" />;
}

function WindowButtons() {
  return (
    <div className="flex items-center gap-[3px]">
      <button type="button" aria-label="Minimize" className="flex h-[14px] w-[14px] items-center justify-center">
        <svg viewBox="0 0 14 14"><path d="M1.500 7.500h11v4h-11z" fill="#eee" stroke="#444" /></svg>
      </button>
      <button type="button" aria-label="Restore" className="flex h-[14px] w-[14px] items-center justify-center">
        <svg viewBox="0 0 14 14">
          <path d="M4.500 1.500h8v8h-2M2 4h8v8H2z" fill="none" stroke="#444" strokeWidth="3" />
          <path d="M4.500 1.500h8v8h-2M2 4h8v8H2zM5 7h2v2H5z" fill="none" stroke="#eee" strokeWidth="1.5" />
        </svg>
      </button>
      <button type="button" aria-label="Close" className="flex h-[14px] w-[14px] items-center justify-center">
        <svg viewBox="0 0 14 14">
          <path d="M3 3l8 8M11 3l-8 8" stroke="#444" strokeWidth="5" />
          <path d="M3 3l8 8M11 3l-8 8" stroke="#f2f2f2" strokeWidth="3" />
        </svg>
      </button>
    </div>
  );
}

const menus = ['File', 'Edit', 'View', 'Insert', 'Format', 'Tools', 'Draw', 'Dimension', 'Modify', 'Express', 'Parametric', 'Window'];

function Header() {
  const [query, setQuery] = useState('');
  return (
    <header className="flex h-[47px] border-b border-[#333] bg-[repeating-linear-gradient(135deg,rgba(255,255,255,0.04)_0_2px,transparent_2px_4px),linear-gradient(#717171,#9a9a9a_50%,#4c4c4c)]">
      <button type="button" aria-label="Application menu" className="mt-[2px] flex h-[41px] w-[41px] items-center border border-[#2d2d2d] bg-linear-to-b from-[#d2d2d2] via-[#858585] to-[#a8a8a8]">
        <svg viewBox="0 0 40 41" className="h-full w-full">
          <path d="M12 4l8 1 7 22-1 3-7 2-1-5-6 1-3 6-5-1z" fill="#c91f25" />
          <path d="M12 4l4 .5-4 22-3 7-5-1z" fill="#e2343a" />
          <path d="M4 33l6-4 16-3 1 3-8 4-12 3z" fill="#8b1216" />
          <path d="M14 13l3 8-5 1z" fill="#f3d9d9" />
          <path d="M8 15C11 8 19 5 24 6l1 7C19 12 13 13 7 21z" fill="#fff" opacity="0.3" />
          <path d="M29 18h7l-3.500 4z" fill="#333b4a" />
        </svg>
      </button>
      <div className="flex min-w-0 flex-1 flex-col">
        <div className="flex h-[27px] justify-between">
          <button type="button" aria-label="Quick access" className="flex h-[26px] w-[19px] items-center justify-center border border-l-0 border-[#2d2d2d]">
            <svg viewBox="0 0 8 6" className="h-[6px] w-2"><path d="M0 0h8v1.500H0zM0 3h8L4 6z" /></svg>
          </button>
          <h1 className="ml-[100px] flex-1 whitespace-pre pl-[216px] pt-[5px] text-xs leading-4 font-bold text-white">
            AutoCAD 2010{'    '}Drawing2.dwg
          </h1>
          <div className="mt-px flex h-6 items-center border border-[#3a3a3a] bg-white/10">
            <svg viewBox="0 0 4 8" className="mx-[5px] h-2 w-1"><path d="M0 0l4 4-4 4z" /></svg>
            <input
              aria-label="Search"
              placeholder="Type a keyword or phrase"
              value={query}
              onChange={(e) => setQuery(e.target.value)}
              className="h-full w-[179px] bg-[#f6f6f6] px-1 text-[11px] italic outline-none placeholder:text-[#777]"
            />
            <button type="button" aria-label="Find" className="ml-1"><Icon name="binoc" /></button>
            <Caret />
            <button type="button" aria-label="Subscription" className="ml-1"><Icon name="key" /></button>
            <button type="button" aria-label="Communication" className="ml-[7px]"><Icon name="dish" /></button>
            <button type="button" aria-label="Favorites" className="ml-[7px]"><Icon name="star" /></button>
            <button type="button" aria-label="Help" className="ml-[7px]"><Icon name="question" /></button>
            <Caret />
          </div>
          <div className="mr-[2px] ml-[18px] flex items-center"><WindowButtons /></div>
        </div>
        <div className="flex h-[19px] items-center justify-between">
          <nav className="ml-[11px] flex gap-[20px] text-white">
            {menus.map((m) => (
              <a key={m} href={`#${m.toLowerCase()}`}>{m}</a>
            ))}
          </nav>
          <div className="mr-[2px]"><WindowButtons /></div>
        </div>
      </div>
    </header>
  );
}

// Mesh vertices: one row per M division, on a step of about 61 units
const xs = [319, 380, 441, 501, 562, 622, 683, 742, 803, 864, 925, 985];
const ys = [
  [312, 252, 269, 283, 285, 299],
  [403, 368, 319, 292, 300, 300],
  [470, 414, 323, 306, 328, 312],
  [495, 430, 331, 355, 355, 332],
  [511, 447, 400, 396, 375, 341],
  [523, 453, 439, 421, 395, 357],
  [505, 458, 453, 439, 415, 383],
];
const rows = ys.map((r, i) => r.map((y, j) => [xs[i + j], y]));
const cols = ys[0].map((_, j) => rows.map((r) => r[j]));

const polyline = (pts) => 'M' + pts.map((p) => p.join(' ')).join('L');

// Point before a, continuing the bend of a, b, c
const extend = (a, b, c) => [2 * a[0] - b[0], 2 * a[1] - b[1] + 0.8 * (c[1] - 2 * b[1] + a[1])];

function curve(pts) {
  const n = pts.length;
  const p = [extend(pts[0], pts[1], pts[2]), ...pts, extend(pts[n - 1], pts[n - 2], pts[n - 3])];
  let d = `M${p[1].join(' ')}`;
  for (let i = 1; i < n; i++) {
    const c1 = [p[i][0] + (p[i + 1][0] - p[i - 1][0]) / 6, p[i][1] + (p[i + 1][1] - p[i - 1][1]) / 6];
    const c2 = [p[i + 1][0] - (p[i + 2][0] - p[i][0]) / 6, p[i + 1][1] - (p[i + 2][1] - p[i][1]) / 6];
    d += `C${c1.join(' ')} ${c2.join(' ')} ${p[i + 1].join(' ')}`;
  }
  return d;
}

function Drawing() {
  const lines = [...rows, ...cols].map(polyline);
  return (
    <svg viewBox="87 103 1131 583" className="absolute inset-0 h-full w-full" fill="none" shapeRendering="crispEdges">
      {cols.map((c, i) => <path key={i} d={curve(c)} stroke="#f00" />)}
      {rows.map((r, i) => <path key={i} d={curve(r)} stroke="#0f0" />)}
      {lines.map((d, i) => <path key={i} d={d} stroke="#fff" strokeWidth="3" />)}
      {lines.map((d, i) => <path key={i} d={d} stroke="#000" strokeDasharray="2 3" />)}

      <path d="M670.500 433v57" stroke="#00a" />
      <path d="M638 453l49 28" stroke="#080" />
      <path d="M655 481l45-26" stroke="#800" />
      <path d="M667.500 467.500h6v6h-6z" stroke="#a4638c" />

      <g stroke="#fff">
        <path d="M319 481v56M319 537l38-21M319 537l-38-21M311 538l8-5 8 5-8 4zM315 535.500l8 5M323 535.500l-8 5" />
        <path d="M355 513l14-4-8 9z" fill="#fff" />
        <path d="M283 513l-13-4 7 9z" fill="#fff" />
        <path d="M362 512l7-3-5 6zM276 512l-6-3 4 6z" fill="#555" stroke="none" />
      </g>
      <g fill="#fff" fontFamily="Lato, sans-serif" fontWeight="300" fontSize="19" textAnchor="middle" shapeRendering="auto">
        <text x="319" y="471">Z</text>
        <text x="258" y="508">Y</text>
        <text x="383" y="509">X</text>
      </g>
    </svg>
  );
}

function MeshTip() {
  return (
    <div className="absolute top-[384px] left-[599px] h-[81px] w-[124px] border border-[#9a9a9a] bg-[#eee] pt-2 pl-2 text-[#444]">
      <h2 className="font-bold leading-[15px]">Polygon Mesh</h2>
      <dl className="mt-1 grid grid-cols-[53px_1fr] leading-[14px]">
        <dt>Color</dt>
        <dd className="flex items-center gap-[2px]"><Swatch />ByLayer</dd>
        <dt>Layer</dt>
        <dd>0</dd>
        <dt>Linetype</dt>
        <dd>ByLayer</dd>
      </dl>
    </div>
  );
}

function ScrollBtn({ dir }) {
  return (
    <button type="button" aria-label={`Scroll ${dir}`} className="flex size-[15px] items-center justify-center rounded-[2px] border border-[#a9bdf0] bg-[#c6d5fd]">
      <Chevron dir={dir} />
    </button>
  );
}

function CommandWindow() {
  return (
    <section className="flex h-14 bg-white font-['Liberation_Mono',monospace] text-[13px] text-black">
      <div className="flex w-[15px] justify-center rounded-l-md bg-[#a3a3a3] pt-[3px]">
        <div className="h-1 w-3 bg-[conic-gradient(#222_25%,transparent_0)] bg-[length:2px_2px]" />
      </div>
      <div className="flex min-w-0 flex-1 flex-col">
        <div className="flex h-[37px] border-b border-[#aca899]">
          <div className="flex-1 whitespace-pre pt-[2px] pl-[2px] leading-4">
            <p>Command:</p>
            <p>Command: *Cancel*</p>
          </div>
          <div className="flex w-4 flex-col justify-between bg-[#f3f1ea] py-px"><ScrollBtn dir="up" /><ScrollBtn dir="down" /></div>
        </div>
        <div className="flex h-[19px] items-center">
          <label htmlFor="cmd" className="pt-[3px] pl-[2px]">Command:</label>
          <input id="cmd" className="min-w-0 flex-1 px-2 outline-none" />
          <div className="flex h-full w-[67px] items-center gap-px bg-[#f3f1ea] pl-[2px]">
            <ScrollBtn dir="left" />
            <span className="flex size-[15px] items-center justify-center gap-px rounded-[2px] bg-[#c6d5fd]">
              <i className="h-[6px] w-px bg-[#8fa9ea]" /><i className="h-[6px] w-px bg-[#8fa9ea]" /><i className="h-[6px] w-px bg-[#8fa9ea]" /><i className="h-[6px] w-px bg-[#8fa9ea]" />
            </span>
            <span className="w-[15px]" />
            <ScrollBtn dir="right" />
          </div>
          <div className="h-full w-4 bg-[#ece9d8]" />
        </div>
      </div>
    </section>
  );
}

function StatusBtn({ name, on, className = 'w-[22px]' }) {
  return (
    <button
      type="button"
      aria-label={name}
      className={`flex h-full shrink-0 items-center justify-center border-l border-[#5a5a5a] ${className} ${on ? 'bg-linear-to-b from-[#e2f3f6] to-[#9fcfdc]' : 'bg-linear-to-b from-[#bdbdbd] to-[#9b9b9b]'}`}
    >
      <Icon name={name} />
    </button>
  );
}

function StatusCaret({ small }) {
  return (
    <svg viewBox="0 0 8 5" className={small ? 'h-[4px] w-[6px]' : 'h-[5px] w-2 shrink-0'}>
      <path d="M0 0h8L4 5z" fill="#111" />
    </svg>
  );
}

function StatusBar() {
  const plain = 'flex h-full items-center border-l border-[#5a5a5a] bg-linear-to-b from-[#bdbdbd] to-[#9b9b9b]';
  return (
    <footer className="flex h-[22px] border-t border-black bg-linear-to-b from-[#969696] to-[#7d7d7d] font-['Liberation_Sans',sans-serif] text-black">
      <div className="flex w-[172px] items-center pl-3 text-[#aaa69a]">364.9590, -201.5717, 0.0000</div>
      <StatusBtn name="snap" />
      <StatusBtn name="grid" />
      <StatusBtn name="ortho" />
      <StatusBtn name="polar" on />
      <StatusBtn name="osnap" on />
      <StatusBtn name="otrack" on />
      <StatusBtn name="ducs" />
      <StatusBtn name="dyn" />
      <StatusBtn name="lwt" />
      <StatusBtn name="qp" />
      <div className="flex-1 border-l border-[#5a5a5a]" />
      <button type="button" className={`${plain} w-[44px] justify-center`}>MODEL</button>
      <StatusBtn name="model" on />
      <StatusBtn name="layout" />
      <StatusBtn name="quicklay" />
      <StatusBtn name="quickdraw" />
      <div className="w-3 bg-[#6e6e6e]" />
      <StatusBtn name="pan" />
      <StatusBtn name="zoom" />
      <StatusBtn name="wheel" />
      <StatusBtn name="motion" />
      <div className="w-3 bg-[#6e6e6e]" />
      <button type="button" className={`${plain} w-[50px] gap-[3px] pl-[2px]`}><Icon name="anno" />1:1<StatusCaret /></button>
      <StatusBtn name="annoadd" />
      <StatusBtn name="annoauto" />
      <div className="w-[5px] bg-[#6e6e6e]" />
      <button type="button" className={`${plain} w-[189px] gap-px px-px whitespace-nowrap`}>
        <Icon name="gear" /><span className="flex-1 text-left">2D Drafting &amp; Annotation - Migra</span><StatusCaret />
      </button>
      <StatusBtn name="unlock" className="w-[24px]" />
      <div className="w-[3px] bg-[#6e6e6e]" />
      <button type="button" aria-label="Status menu" className={`${plain} w-[12px] justify-center`}><StatusCaret small /></button>
      <StatusBtn name="cleanscr" />
    </footer>
  );
}

function Task({ icon, children, active }) {
  return (
    <button
      type="button"
      className={`flex h-[25px] w-[158px] items-center gap-[5px] rounded-[3px] border pl-2 whitespace-nowrap text-white ${active ? 'border-[#173f96] bg-[#1e4fb5]' : 'border-[#5a93f7] bg-linear-to-b from-[#4f8ff8] via-[#3b7ef2] to-[#3576ea]'}`}
    >
      {icon}
      {children}
    </button>
  );
}

function Taskbar() {
  return (
    <div className="flex h-[30px] items-center bg-linear-to-b from-[#5a9af8] via-[#2a62dc] via-20% to-[#2157cf]">
      <button type="button" className="mr-[10px] flex h-full w-[97px] items-center gap-1 rounded-r-xl bg-linear-to-b from-[#6cb96a] via-[#3a9538] via-25% to-[#2f8a2f] pl-[10px] text-lg font-bold italic text-white font-['Liberation_Sans',sans-serif]">
        <svg viewBox="0 0 20 18" className="h-[18px] w-5">
          <path d="M3 2c3-2 5-1 7 0L8.500 8c-2-1-4-2-7 0z" fill="#e8562a" />
          <path d="M11 3c3 1 5 1 7-1l-1.500 6c-2 2-4 2-7 1z" fill="#8fc93a" />
          <path d="M1.200 9.500c3-2 5-1 7 0L6.700 15.500c-2-1-4-2-7 0z" fill="#5a94e8" />
          <path d="M9.200 10.500c3 1 5 1 7-1l-1.500 6c-2 2-4 2-7 1z" fill="#f8c72d" />
        </svg>
        start
      </button>
      <div className="flex min-w-0 flex-1 gap-[2px]">
        <Task icon={<Icon name="folder" />}>C:\Documents and Se...</Task>
        <Task
          active
          icon={
            <span className="flex size-4 items-start justify-center bg-[#f3f3f3] text-[#d2232a]">
              <b className="text-[11px] leading-[14px]">A</b>
              <b className="text-[6px] leading-[8px]">10</b>
            </span>
          }
        >
          AutoCAD 2010 - [Dra...
        </Task>
        <Task icon={<Icon name="notepad" />}>instructions.txt - Not...</Task>
        <Task icon={<Icon name="paint" />}>4.PNG - Paint</Task>
      </div>
      <div className="flex items-center pr-4 text-white">
        <span className="bg-[#2c6ade] px-1 py-px">EN</span>
        <Icon name="ime" className="ml-[5px] size-[14px]" />
        <span className="ml-[7px] flex w-4 flex-col items-center gap-[3px]">
          <Icon name="restore" className="h-3 w-4" />
          <svg viewBox="0 0 6 3" className="h-[3px] w-[6px]"><path d="M0 0h6L3 3z" fill="#fff" /></svg>
        </span>
      </div>
      <div className="flex h-full w-[254px] items-center gap-[2px] border-l border-[#0a3a8c] bg-linear-to-b from-[#3cb0f6] via-[#1590e8] via-20% to-[#0f84dc] pl-[9px] text-white">
        {['t1', 't2', 't3', 't4', 't5', 't6', 't7', 't8', 't9', 't10'].map((t) => (
          <Icon key={t} name={t} />
        ))}
        <time className="ml-[5px] whitespace-nowrap">10:20 PM</time>
      </div>
    </div>
  );
}

export default function App() {
  return (
    <div className="flex min-h-screen flex-col overflow-hidden bg-[#696969] font-['DejaVu_Sans_Condensed','Roboto',sans-serif] text-[11px] leading-[14px]">
      <Header />

      <div className="flex gap-px">
        <HBar tools="new open save | print preview publish web | cut copyclip paste match blockedit | undo v redo v | pan zoom zoomwin zoomprev orbit | props center palettes sheets markup calc | help" />
        <HBar tools="union subtract intersect | extrude movefaces offsetfaces delfaces rotfaces taper copyfaces colorfaces | copyedges coloredges | imprint clean separate shell check" />
      </div>

      <div className="mt-[3px] flex gap-px text-black">
        <HBar tools="layerprops">
          <Combo
            label="Layer"
            value="0"
            width="w-[299px]"
            lead={
              <span className="flex items-center pl-[2px]">
                <Icon name="bulb" /><Icon name="sun" /><Icon name="freeze" className="ml-px size-4" /><Icon name="lock" className="mx-px size-4" /><Swatch />
              </span>
            }
          />
          <Tool name="layercur" />
          <Tool name="layerprev" />
          <Tool name="layerstate" />
        </HBar>
        <HBar>
          <Combo label="Color" value="ByLayer" width="w-[150px]" lead={<span className="pl-[5px]"><span className="flex"><Swatch /></span></span>} />
          <Sep />
          <Combo label="Linetype" value="ByLayer" width="w-[160px]" padding="pl-[5px]" lead={<i className="ml-1 h-px w-[60px] shrink-0 bg-black" />} />
          <Sep />
          <Combo label="Lineweight" value="ByLayer" width="w-[125px]" padding="pl-[5px]" lead={<i className="ml-1 h-px w-[35px] shrink-0 bg-black" />} />
          <Sep />
          <Combo label="Plot style" value="ByColor" width="w-[119px]" padding="pl-[9px]" disabled />
        </HBar>
        <HBar tools="ucs ucsman |">
          <Combo label="View" value="Top" width="w-[174px]" padding="pl-[5px]" lead={<Icon name="topview" className="ml-[6px] size-4" />} />
        </HBar>
      </div>

      <main className="mt-[4px] flex flex-1">
        <div className="flex items-start gap-1 pr-[5px]">
          <VBar tools="line xline pline polygon rect arc circle cloud spline ellipse ellarc insblock mkblock point hatch gradient region table mtext" />
          <div>
            <VBar tools="erase copy mirror offset array move rotate scale stretch trim extend breakpt break join chamfer fillet explode" />
            <VBar tools="meshbox smooth smoothmore smoothless refine | crease uncrease" />
          </div>
          <div>
            <VBar tools="namedviews | vtop vbottom vleft vright vfront vback | sw se ne nw | camera | viewprev" />
            <VBar tools="wire2d | wire3d hidden3d realistic conceptual | vsmanager" />
          </div>
        </div>
        <div className="relative min-w-0 flex-1 border-2 border-t-[#8f8b7a] border-r-[#fffff0] border-b-[#fffff0] border-l-[#8f8b7a] bg-black">
          <Drawing />
          <MeshTip />
        </div>
        <div className="flex items-start gap-1 pr-[3px] pl-[5px]">
          <div>
            <VBar tools="track from | endpoint midpoint intersection apparent extension | osnapcenter quadrant tangent | perpendicular parallel osinsert node | nearest osnone | ossettings" />
            <VBar tools="mbox mcone mcylinder mpyramid msphere mwedge mtorus" />
          </div>
          <VBar tools="polysolid box wedge cone sphere cylinder torus pyramid helix planar | extrude2 presspull sweep revolve loft | union subtract intersect | align3d gizmo align" />
        </div>
      </main>

      <div className="mt-1">
        <CommandWindow />
        <StatusBar />
        <Taskbar />
      </div>
    </div>
  );
}
